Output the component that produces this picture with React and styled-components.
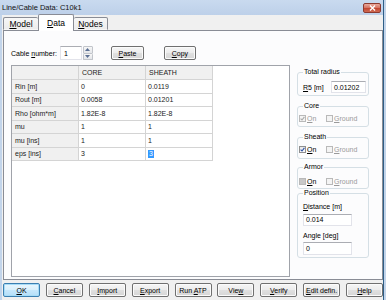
import React from 'react'
import styled, { createGlobalStyle } from 'styled-components'

const GlobalStyle = createGlobalStyle`
  html, body {
    margin: 0;
    padding: 0;
    background: #f0f0f0;
  }
  body {
    font-family: "Liberation Sans", Arial, sans-serif;
    font-size: 7px;
    color: #000;
  }
  * {
    box-sizing: border-box;
  }
`

const rows = [
  ['Rin [m]', '0', '0.0119'],
  ['Rout [m]', '0.0058', '0.01201'],
  ['Rho [ohm*m]', '1.82E-8', '1.82E-8'],
  ['mu', '1', '1'],
  ['mu [ins]', '1', '1'],
  ['eps [ins]', '3', '3'],
]

const buttons = [
  ['O', 'K', true],
  ['C', 'ancel'],
  ['I', 'mport'],
  ['E', 'xport'],
  ['Run ', 'A', 'TP'],
  ['Vie', 'w', ''],
  ['V', 'erify'],
  ['E', 'dit defin.'],
  ['H', 'elp'],
]

function Label({ parts }) {
  // parts: [before, key, after] or [key, after]
  if (parts.length === 3 && typeof parts[2] === 'string') {
    return <>{parts[0]}<Key>{parts[1]}</Key>{parts[2]}</>
  }
  return <><Key>{parts[0]}</Key>{parts[1]}</>
}

function CheckMark({ color }) {
  return (
    <svg width="5" height="5" viewBox="0 0 5 5">
      <path d="M0.6 2.6 L2 4 L4.4 0.8" fill="none" stroke={color} strokeWidth="1.1" />
    </svg>
  )
}

function Check({ variant }) {
  return (
    <Box $variant={variant}>
      {variant === 'checked' && <CheckMark color="#2a4fa8" />}
      {variant === 'dimChecked' && <CheckMark color="#a9a9a9" />}
    </Box>
  )
}

function App() {
  return (
    <Frame>
      <GlobalStyle />
      <Inner>
        <TitleBar>
          <Title>Line/Cable Data: C10k1</Title>
          <Close>
            <svg width="7" height="6" viewBox="0 0 7 6">
              <path d="M1 0.5 L6 5.5 M6 0.5 L1 5.5" stroke="#fff" strokeWidth="1.4" />
            </svg>
          </Close>
        </TitleBar>

        <TabStrip>
          <Tab $w={35}><Key>M</Key>odel</Tab>
          <Tab $w={36} $active><Key>D</Key>ata</Tab>
          <Tab $w={34}><Key>N</Key>odes</Tab>
        </TabStrip>

        <Panel>
          <CableRow>
            <span>Cable <Key>n</Key>umber:</span>
            <NumberInput>1</NumberInput>
            <Spinner>
              <SpinHalf>
                <svg width="5" height="3" viewBox="0 0 5 3"><path d="M0 3 L2.5 0 L5 3 Z" fill="#5b6f93" /></svg>
              </SpinHalf>
              <SpinHalf>
                <svg width="5" height="3" viewBox="0 0 5 3"><path d="M0 0 L2.5 3 L5 0 Z" fill="#5b6f93" /></svg>
              </SpinHalf>
            </Spinner>
            <Button $w={33} $ml={18}><Key>P</Key>aste</Button>
            <Button $w={32} $ml={20}><Key>C</Key>opy</Button>
          </CableRow>

          <Body>
            <GridBox>
              <Grid>
                <HeadCell />
                <HeadCell>CORE</HeadCell>
                <HeadCell>SHEATH</HeadCell>
                {rows.map((r, i) => (
                  <React.Fragment key={r[0]}>
                    <HeadCell>{r[0]}</HeadCell>
                    <Cell>{r[1]}</Cell>
                    <Cell>{i === rows.length - 1 ? <Selected>{r[2]}</Selected> : r[2]}</Cell>
                  </React.Fragment>
                ))}
              </Grid>
            </GridBox>

            <Side>
              <Group $mt={3} $pb={2}>
                <Legend>Total radius</Legend>
                <FieldRow $mt={5}>
                  <span><Key>R</Key>5 [m]</span>
                  <TextInput $w={35}>0.01202</TextInput>
                </FieldRow>
              </Group>

              <Group $mt={6} $pb={3}>
                <Legend>Core</Legend>
                <CheckRow $mt={4}>
                  <Option $w={27} $dim><Check variant="dimChecked" /><span><Key>O</Key>n</span></Option>
                  <Option $dim><Check variant="dim" /><span><Key>G</Key>round</span></Option>
                </CheckRow>
              </Group>

              <Group $mt={6} $pb={4}>
                <Legend>Sheath</Legend>
                <CheckRow $mt={4}>
                  <Option $w={27}><Check variant="checked" /><span><Key>O</Key>n</span></Option>
                  <Option $dim><Check variant="dim" /><span><Key>G</Key>round</span></Option>
                </CheckRow>
              </Group>

              <Group $mt={4} $pb={2}>
                <Legend>Armor</Legend>
                <CheckRow $mt={6}>
                  <Option $w={27}><Check variant="gray" /><span><Key>O</Key>n</span></Option>
                  <Option $dim><Check variant="dim" /><span><Key>G</Key>round</span></Option>
                </CheckRow>
              </Group>

              <Group $mt={0} $pb={2}>
                <Legend>Position</Legend>
                <StackRow $mt={6}>
                  <span><Key>D</Key>istance [m]</span>
                  <TextInput $w={49} $mt={3}>0.014</TextInput>
                </StackRow>
                <StackRow $mt={6}>
                  <span>Angle [deg]</span>
                  <TextInput $w={49} $mt={2} $h={13}>0</TextInput>
                </StackRow>
              </Group>
            </Side>
          </Body>
        </Panel>

        <ButtonRow>
          {buttons.map((b, i) => (
            <Button key={i} $w={37} $default={b[2] === true}>
              <Label parts={b[2] === true ? [b[0], b[1]] : b} />
            </Button>
          ))}
        </ButtonRow>
      </Inner>
    </Frame>
  )
}

const Frame = styled.div`
  width: 386px;
  height: 300px;
  overflow: hidden;
  display: flex;
  padding: 0 3px 0 2px;
  background: #c2d4ea;
  box-shadow: inset -2px 0 0 #c2d4ea, inset -3px 0 0 #2f5f87;
`
const Inner = styled.div`
  flex: 1;
  display: flex;
  flex-direction: column;
  background: #f0f0f0;
`
const TitleBar = styled.div`
  height: 15px;
  flex: none;
  display: flex;
  align-items: flex-start;
  justify-content: space-between;
  padding: 0 2px 0 2px;
  margin-left: -2px;
  background: linear-gradient(#c9daef, #bdd0e9);
`
const Title = styled.span`
  font-size: 7.5px;
  line-height: 8px;
  margin-top: 4px;
  color: #111;
`
const Close = styled.div`
  width: 18px;
  height: 10px;
  margin-top: 3px;
  display: flex;
  align-items: center;
  justify-content: center;
  border: 1px solid #8c3a30;
  border-radius: 2px;
  background: linear-gradient(#e9a99c, #d3705f 50%, #c2432f 51%, #cf6a52);
`
const TabStrip = styled.div`
  height: 15px;
  flex: none;
  display: flex;
  align-items: flex-end;
  padding-left: 1px;
  position: relative;
  z-index: 1;
  background: #f0f0f0;
`
const Tab = styled.div`
  width: ${p => p.$w}px;
  height: ${p => (p.$active ? 17 : 13)}px;
  margin-bottom: ${p => (p.$active ? -1 : 0)}px;
  display: flex;
  align-items: center;
  justify-content: center;
  font-size: 8.5px;
  border: 1px solid #898c95;
  border-bottom: ${p => (p.$active ? 'none' : '1px solid transparent')};
  border-left-width: ${p => (p.$active ? 1 : 0)}px;
  border-right-width: ${p => (p.$active ? 1 : 0)}px;
  border-radius: 2px 2px 0 0;
  background: ${p => (p.$active ? '#ffffff' : 'linear-gradient(#f7f7f7, #ececec)')};
  &:first-child {
    border-left-width: 1px;
  }
  &:last-child {
    border-right-width: 1px;
  }
`
const Key = styled.span`
  text-decoration: underline;
`
const Panel = styled.div`
  height: 250px;
  flex: none;
  margin-left: 1px;
  border: 1px solid #898c95;
  background: #fcfcfd;
  padding: 15px 0 0 7px;
`
const CableRow = styled.div`
  display: flex;
  align-items: center;
  height: 14px;
`
const NumberInput = styled.div`
  width: 22px;
  height: 14px;
  margin-left: 3px;
  display: flex;
  align-items: center;
  padding-left: 3px;
  background: #fff;
  border: 1px solid #e2e3ea;
  border-top-color: #abadb3;
`
const Spinner = styled.div`
  width: 10px;
  height: 14px;
  margin-left: 1px;
  display: flex;
  flex-direction: column;
`
const SpinHalf = styled.div`
  flex: 1;
  display: flex;
  align-items: center;
  justify-content: center;
  border: 1px solid #c1c4ca;
  border-radius: 1px;
  background: linear-gradient(#f6f6f6, #e4e6ea);
  & + & {
    border-top: none;
  }
`
const Button = styled.button`
  width: ${p => p.$w}px;
  height: 14px;
  margin-left: ${p => p.$ml || 0}px;
  padding: 0;
  font-family: inherit;
  font-size: 7px;
  color: #000;
  border: 1px solid ${p => (p.$default ? '#3c7fb1' : '#707070')};
  border-radius: 2px;
  background: ${p =>
    p.$default
      ? 'linear-gradient(#eaf6fd, #d9f0fc 50%, #c6e7fc 51%, #b4def8)'
      : 'linear-gradient(#f6f6f6, #ececec 50%, #e0e0e0 51%, #d6d6d6)'};
  box-shadow: inset 0 0 0 1px ${p => (p.$default ? '#a7dcf7' : '#fbfbfb')};
`
const Body = styled.div`
  display: flex;
  height: 212px;
  margin-top: 5px;
`
const GridBox = styled.div`
  width: 279px;
  height: 212px;
  flex: none;
  border: 1px solid #a0a3aa;
  background: #fff;
`
const Grid = styled.div`
  display: grid;
  grid-template-columns: repeat(3, 67px);
  grid-template-rows: 14px repeat(6, 13.5px);
  color: #222;
`
const Cell = styled.div`
  display: flex;
  align-items: center;
  padding-left: 2px;
  border-right: 1px solid #d4d4d4;
  border-bottom: 1px solid #d4d4d4;
  background: #fff;
  white-space: nowrap;
`
const HeadCell = styled(Cell)`
  padding-left: 3px;
  background: #f0f0f0;
`
const Selected = styled.span`
  background: #3399ff;
  color: #fff;
  padding: 0 1px;
  line-height: 8px;
`
const Side = styled.div`
  margin-left: 7px;
  width: 72px;
  display: flex;
  flex-direction: column;
`
const Group = styled.fieldset`
  margin: ${p => p.$mt}px 0 0;
  padding: 0 1px ${p => p.$pb}px;
  min-width: 0;
  border: 1px solid #d5dfe5;
  border-radius: 3px;
`
const Legend = styled.legend`
  margin-left: 4px;
  padding: 0 1px;
  font-size: 7px;
  line-height: 8px;
`
const FieldRow = styled.div`
  display: flex;
  align-items: center;
  justify-content: space-between;
  margin-top: ${p => p.$mt}px;
  padding: 0 1px 0 4px;
`
const StackRow = styled.div`
  display: flex;
  flex-direction: column;
  align-items: flex-start;
  margin-top: ${p => p.$mt}px;
  padding-left: 4px;
  line-height: 8px;
`
const TextInput = styled.div`
  width: ${p => p.$w}px;
  height: ${p => p.$h || 12}px;
  margin-top: ${p => p.$mt || 0}px;
  display: flex;
  align-items: center;
  padding-left: 2px;
  background: #fff;
  border: 1px solid #e2e3ea;
  border-top-color: #abadb3;
`
const CheckRow = styled.div`
  display: flex;
  align-items: center;
  height: 9px;
  margin-top: ${p => p.$mt}px;
`
const Option = styled.div`
  display: flex;
  align-items: center;
  gap: 1px;
  width: ${p => (p.$w ? `${p.$w}px` : 'auto')};
  color: ${p => (p.$dim ? '#9a9a9a' : '#000')};
`
const Box = styled.span`
  width: 7px;
  height: 7px;
  display: flex;
  align-items: center;
  justify-content: center;
  border: 1px solid ${p => (p.$variant === 'checked' ? '#8f8f8f' : '#b9b9b9')};
  background: ${p =>
    p.$variant === 'gray'
      ? '#c8c8c8'
      : p.$variant === 'checked'
        ? 'linear-gradient(#e6e6e6, #fdfdfd)'
        : '#f4f4f4'};
`
const ButtonRow = styled.div`
  display: flex;
  justify-content: space-between;
  margin-top: 3px;
  padding-left: 1px;
`

export default App
